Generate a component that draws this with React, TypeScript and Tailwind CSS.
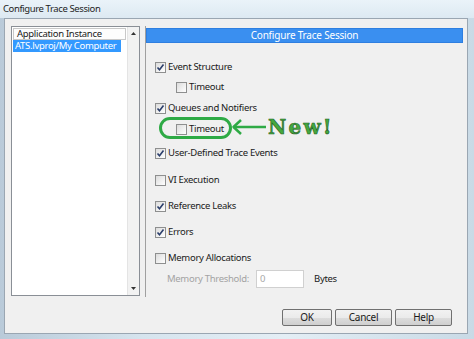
import React from "react";

type Item = { label: string; checked: boolean; indent?: boolean; mt: number };

const items: Item[] = [
  { label: "Event Structure", checked: true, mt: 17 },
  { label: "Timeout", checked: false, indent: true, mt: 6 },
  { label: "Queues and Notifiers", checked: true, mt: 7 },
  { label: "Timeout", checked: false, indent: true, mt: 7 },
  { label: "User-Defined Trace Events", checked: true, mt: 10 },
  { label: "VI Execution", checked: false, mt: 13 },
  { label: "Reference Leaks", checked: true, mt: 12 },
  { label: "Errors", checked: true, mt: 12 },
  { label: "Memory Allocations", checked: false, mt: 12 },
];

function Box({ checked }: { checked: boolean }) {
  return (
    <span className="w-[11px] h-[11px] shrink-0 border border-[#8e8f8f] bg-[linear-gradient(135deg,#dcdcdc,#ffffff)] flex items-center justify-center">
      {checked && (
        <svg width="9" height="9" viewBox="0 0 9 9">
          <path d="M1.5 4.5 L3.5 6.8 L7.5 1.5" fill="none" stroke="#2b3e6b" strokeWidth="1.6" />
        </svg>
      )}
    </span>
  );
}

function Btn({ label, w }: { label: string; w: string }) {
  return (
    <div className={`${w} h-[17px] border border-[#707070] rounded-[2px] bg-[linear-gradient(#f2f2f2,#ebebeb_50%,#dddddd_51%,#cfcfcf)] flex items-center justify-center text-[10px] text-[#1a1a1a]`}>
      {label}
    </div>
  );
}

export default function App() {
  return (
    <div
      className="w-[474px] h-[339px] flex flex-col bg-[linear-gradient(90deg,#b9cad9,#d6e4ee_30%,#e4eef5_60%,#c9dae6)] text-[9.5px] tracking-[-0.3px] whitespace-nowrap overflow-hidden"
      style={{ fontFamily: '"Segoe UI", "Noto Sans", sans-serif' }}
    >
      {/* title bar */}
      <div className="h-[19px] flex items-center pl-[3px] text-[9.5px] tracking-[-0.4px] text-[#1e1e1e] bg-[linear-gradient(#eaf3f9,#dde9f2)]">
        Configure Trace Session
      </div>

      <div className="flex-1 flex pl-[4px] pr-[6px] pb-[5px]">
        <div className="flex-1 flex flex-col bg-[#f0f0f0] border border-[#9aa6b2] pt-[7px] pl-[6px] pr-[4px] pb-[7px]">
          <div className="flex gap-[5px]">
            {/* list box */}
            <div className="w-[129px] h-[270px] bg-white border border-[#8a8f96] flex">
              <div className="flex-1 flex flex-col p-[1px]">
                <div className="h-[12px] border border-[#c8c8c8] flex items-center pl-[3px] text-[#1a1a1a] bg-[#fdfdfd]">
                  Application Instance
                </div>
                <div className="h-[12px] w-[108px] bg-[#3399ff] text-white flex items-center pl-[2px]">
                  ATS.lvproj/My Computer
                </div>
              </div>
              <div className="w-[12px] bg-[#f2f2f2] border-l border-[#e4e4e4] flex flex-col items-center justify-between py-[5px]">
                <svg width="5" height="3" viewBox="0 0 5 3"><path d="M0 3 L2.5 0 L5 3Z" fill="#333" /></svg>
                <svg width="5" height="3" viewBox="0 0 5 3"><path d="M0 0 L2.5 3 L5 0Z" fill="#333" /></svg>
              </div>
            </div>

            {/* config panel */}
            <div className="w-[318px] h-[271px] border-l border-[#a0a0a0] pt-[2px] relative">
              <div className="w-[317px] h-[15px] bg-[#3a8ff0] border border-[#2f7fe0] flex items-center justify-center text-white text-[10px] tracking-[-0.2px]">
                Configure Trace Session
              </div>
              <div className="flex flex-col pl-[9px]">
                {items.map((it, i) => (
                  <div
                    key={i}
                    className={`h-[14px] flex items-center gap-[2px] text-[#1a1a1a] ${it.indent ? "pl-[21px]" : ""}`}
                    style={{ marginTop: it.mt }}
                  >
                    <Box checked={it.checked} />
                    <span>{it.label}</span>
                  </div>
                ))}
                <div className="h-[18px] mt-[5px] flex items-center pl-[12px]">
                  <span className="w-[89px] text-[#a3a3a3]">Memory Threshold:</span>
                  <div className="w-[48px] h-[18px] bg-white border border-[#d0d0d0] pl-[3px] text-[#a8a8a8] flex items-center">0</div>
                  <span className="ml-[10px] text-[#1a1a1a]">Bytes</span>
                </div>
              </div>

              {/* annotation */}
              <div className="absolute left-[13px] top-[91px] w-[73px] h-[22px] border-[3px] border-[#2eaa45] rounded-[11px]" />
              <svg className="absolute left-[85px] top-[92px]" width="36" height="18" viewBox="0 0 36 18">
                <path d="M35 9 L3 9" stroke="#2eaa45" strokeWidth="2.5" />
                <path d="M10 2 L2.5 9 L10 16" fill="none" stroke="#2eaa45" strokeWidth="2.5" strokeLinejoin="round" />
              </svg>
              <span
                className="absolute left-[122px] top-[91px] text-[20px] font-bold text-[#45a83f] leading-none tracking-[2.2px]"
                style={{ fontFamily: '"DejaVu Serif", serif', WebkitTextStroke: "0.6px #1d5e22" }}
              >
                New!
              </span>
            </div>
          </div>

          <div className="mt-[12px] flex justify-end gap-[3px] pr-[11px]">
            <Btn label="OK" w="w-[50px]" />
            <Btn label="Cancel" w="w-[57px]" />
            <Btn label="Help" w="w-[57px]" />
          </div>
        </div>
      </div>
    </div>
  );
}
